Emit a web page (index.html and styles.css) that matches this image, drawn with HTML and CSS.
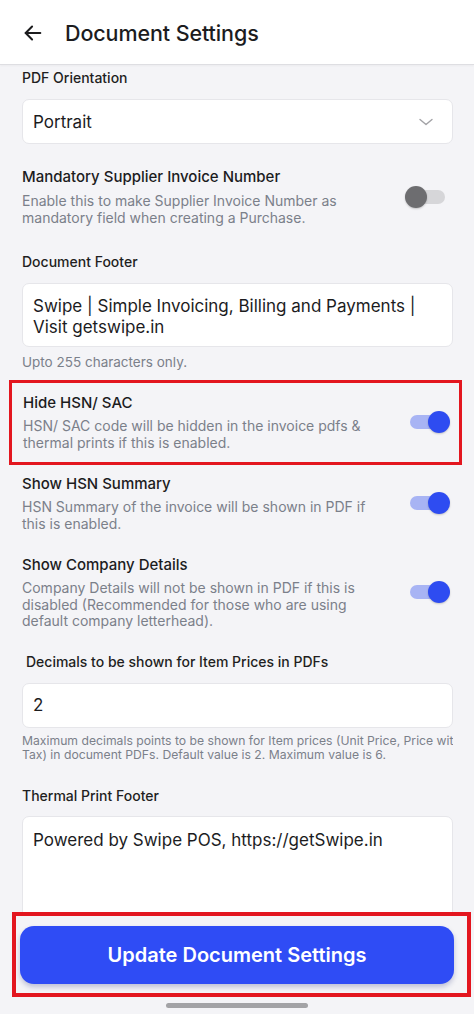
FILE: index.html
```html
<!DOCTYPE html>
<html lang="en">
<head>
    <meta charset="UTF-8">
    <meta name="viewport" content="width=device-width, initial-scale=1.0">
    <title>Document Settings</title>
    <link rel="stylesheet" href="styles.css">
</head>
<body>
    <div class="screen">
        <header class="topbar">
            <svg class="back-icon" width="22" height="22" viewBox="0 0 24 24" fill="none" stroke="#1c1c1e" stroke-width="2.2" stroke-linecap="round" stroke-linejoin="round">
                <path d="M20 12H4"/>
                <path d="M11 5l-7 7 7 7"/>
            </svg>
            <h1 class="title">Document Settings</h1>
        </header>

        <main class="content">
            <div class="field-label">PDF Orientation</div>
            <div class="field select-field">
                <span>Portrait</span>
                <svg width="14" height="8" viewBox="0 0 14 8" fill="none" stroke="#a2a2a6" stroke-width="1.4" stroke-linecap="round" stroke-linejoin="round">
                    <path d="M1 1.5l6 5 6-5"/>
                </svg>
            </div>

            <div class="setting-row gap-mandatory">
                <div class="setting-text">
                    <div class="setting-title">Mandatory Supplier Invoice Number</div>
                    <div class="setting-desc">Enable this to make Supplier Invoice Number as mandatory field when creating a Purchase.</div>
                </div>
                <div class="switch"><span class="knob"></span></div>
            </div>

            <div class="field-label gap-footer">Document Footer</div>
            <div class="field text-field footer-field">Swipe | Simple Invoicing, Billing and Payments | Visit getswipe.in</div>
            <div class="hint">Upto 255 characters only.</div>

            <div class="setting-row highlighted">
                <div class="setting-text">
                    <div class="setting-title">Hide HSN/ SAC</div>
                    <div class="setting-desc">HSN/ SAC code will be hidden in the invoice pdfs &amp; thermal prints if this is enabled.</div>
                </div>
                <div class="switch on"><span class="knob"></span></div>
            </div>

            <div class="setting-row gap-summary">
                <div class="setting-text">
                    <div class="setting-title">Show HSN Summary</div>
                    <div class="setting-desc">HSN Summary of the invoice will be shown in PDF if this is enabled.</div>
                </div>
                <div class="switch on"><span class="knob"></span></div>
            </div>

            <div class="setting-row gap-company">
                <div class="setting-text">
                    <div class="setting-title">Show Company Details</div>
                    <div class="setting-desc">Company Details will not be shown in PDF if this is disabled (Recommended for those who are using default company letterhead).</div>
                </div>
                <div class="switch on"><span class="knob"></span></div>
            </div>

            <div class="field-label indented gap-decimals">Decimals to be shown for Item Prices in PDFs</div>
            <div class="field select-field"><span>2</span></div>
            <div class="small-hint-clip">
                <div class="small-hint">Maximum decimals points to be shown for Item prices (Unit Price, Price with Tax) in document PDFs. Default value is 2. Maximum value is 6.</div>
            </div>

            <div class="field-label gap-thermal">Thermal Print Footer</div>
            <div class="field text-field thermal-field">Powered by Swipe POS, https://getSwipe.in</div>
        </main>

        <footer class="bottom">
            <div class="button-frame">
                <button class="update-btn">Update Document Settings</button>
            </div>
            <div class="home-bar"></div>
        </footer>
    </div>
</body>
</html>
```

FILE: styles.css
```css
html, body {
    margin: 0;
    padding: 0;
}
body {
    font-family: Inter, 'Noto Sans', sans-serif;
    background: #f4f4f7;
    color: #1c1c1e;
}
.screen {
    height: 100vh;
    display: flex;
    flex-direction: column;
    overflow: hidden;
}
.topbar {
    flex: none;
    height: 64px;
    background: #ffffff;
    border-bottom: 1px solid #dedee2;
    display: flex;
    align-items: center;
    padding-left: 22px;
    box-shadow: 0 1px 2px rgba(0,0,0,0.04);
}
.back-icon {
    flex: none;
    margin-top: 1px;
}
.title {
    margin: 1px 0 0 21px;
    font-size: 21.5px;
    font-weight: 500;
    letter-spacing: -0.1px;
    color: #1c1c1e;
}
.content {
    flex: 1;
    min-height: 0;
    overflow: hidden;
    padding: 4px 21px 0 22px;
}
.field-label {
    font-size: 14px;
    line-height: 18px;
    font-weight: 500;
    color: #1f1f22;
}
.field-label.indented {
    padding-left: 4px;
}
.field {
    box-sizing: border-box;
    background: #ffffff;
    border: 1px solid #e6e6ea;
    border-radius: 7px;
    font-size: 17px;
    color: #1c1c1e;
}
.select-field {
    margin-top: 12px;
    height: 45px;
    display: flex;
    align-items: center;
    justify-content: space-between;
    padding: 0 19px 0 10px;
}
.text-field {
    margin-top: 12px;
    padding: 12px 10px;
    line-height: 21px;
}
.footer-field {
    height: 64px;
}
.thermal-field {
    margin-top: 11px;
    height: 200px;
    padding-top: 13px;
}
.hint {
    margin-top: 7px;
    font-size: 13.5px;
    line-height: 16px;
    color: #7b808a;
}
.setting-row {
    display: flex;
    align-items: center;
    justify-content: space-between;
}
.setting-text {
    width: 352px;
}
.setting-title {
    font-size: 15px;
    line-height: 20px;
    font-weight: 500;
    color: #1c1c1e;
}
.setting-desc {
    margin-top: 5px;
    font-size: 14px;
    line-height: 16.5px;
    color: #7b808a;
}
.gap-mandatory { margin-top: 23px; }
.gap-mandatory .setting-desc { margin-top: 6px; }
.gap-footer { margin-top: 27px; }
.gap-summary { margin-top: 9px; }
.gap-company { margin-top: 23px; }
.gap-decimals { margin-top: 23px; }
.gap-thermal { margin-top: 25px; }
.highlighted {
    margin: 10px -9px 0 -13px;
    padding: 10px 6px 11px 11px;
    border: 3px solid #e3161f;
}
.switch {
    position: relative;
    width: 45px;
    height: 22px;
    margin-right: 3px;
    flex: none;
}
.switch::before {
    content: "";
    position: absolute;
    left: 5px;
    right: 5px;
    top: 4px;
    height: 14px;
    border-radius: 7px;
    background: #d6d6d9;
}
.knob {
    position: absolute;
    left: 0;
    top: 0;
    width: 22px;
    height: 22px;
    border-radius: 50%;
    background: #6d6d70;
    box-shadow: 0 1px 2px rgba(0,0,0,0.2);
}
.switch.on::before {
    background: #a8b4f4;
}
.switch.on .knob {
    left: auto;
    right: 0;
    background: #2e4cf1;
}
.small-hint-clip {
    overflow: hidden;
    margin-top: 6px;
}
.small-hint {
    width: 448px;
    font-size: 12.2px;
    line-height: 14px;
    color: #7b808a;
}
.bottom {
    flex: none;
    height: 102px;
    background: #f4f4f7;
    display: flex;
    flex-direction: column;
    align-items: flex-start;
}
.button-frame {
    box-sizing: border-box;
    width: 459px;
    margin-left: 12px;
    padding: 10px 13px 9px 4px;
    border: 4px solid #e3161f;
}
.update-btn {
    display: block;
    width: 100%;
    height: 58px;
    border: none;
    border-radius: 14px;
    background: #2f4cf5;
    color: #ffffff;
    font-family: Inter, 'Noto Sans', sans-serif;
    font-size: 20px;
    font-weight: 600;
    box-shadow: 0 3px 5px rgba(30,40,120,0.25);
}
.home-bar {
    width: 142px;
    height: 5px;
    border-radius: 3px;
    background: #a3a3a6;
    margin: 6px 0 0 166px;
}
```
